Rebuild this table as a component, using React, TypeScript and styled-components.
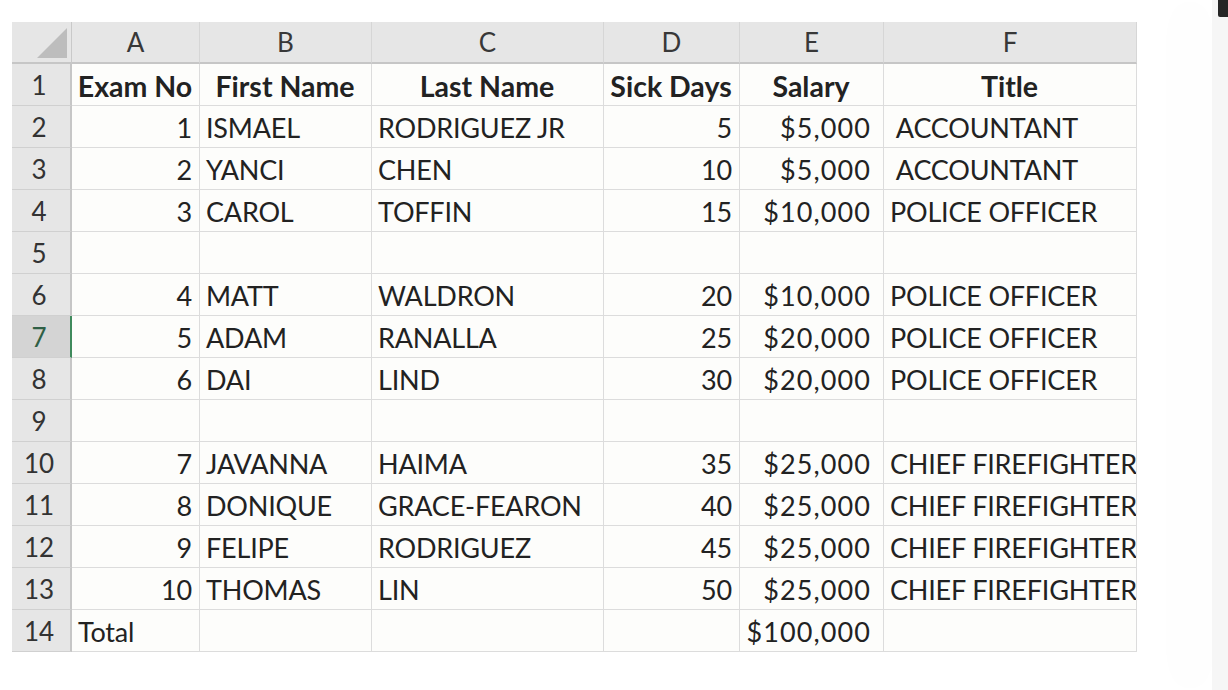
import React from "react";
import styled, { createGlobalStyle } from "styled-components";

const Global = createGlobalStyle`
  html, body { margin: 0; padding: 0; background: #ffffff; }
  body { width: 1228px; height: 690px; overflow: hidden; }
`;

const Page = styled.div`
  position: relative;
  width: 1228px;
  height: 690px;
  display: flex;
  background: #ffffff;
  font-family: Lato, "Open Sans", sans-serif;
`;

const Main = styled.div`
  flex: 1;
  padding: 22px 0 0 12px;
`;

const Side = styled.div`
  width: 16px;
  background: #f6f6f6;
  box-shadow: -30px 0 40px rgba(0, 0, 0, 0.025);
`;

const Corner = styled.div`
  position: absolute;
  top: 0;
  right: 0;
  width: 10px;
  height: 17px;
  background: #262626;
  border-bottom-left-radius: 2px;
`;

const Sheet = styled.div`
  display: grid;
  grid-template-columns: 60px 128px 172px 232px 136px 144px 253px;
  grid-auto-rows: 42px;
  width: 1125px;
  background: #fdfdfb;
`;

const ColHead = styled.div<{ $first?: boolean }>`
  background: #e6e6e6;
  border-right: 1px solid ${(p) => (p.$first ? "#c9c9c9" : "#d6d6d6")};
  border-bottom: 2px solid #c6c6c6;
  display: flex;
  align-items: center;
  justify-content: center;
  font-size: 26px;
  color: #383838;
  position: relative;
  box-sizing: border-box;
`;

const Triangle = styled.div`
  position: absolute;
  right: 4px;
  bottom: 4px;
  width: 0;
  height: 0;
  border-left: 30px solid transparent;
  border-bottom: 30px solid #bdbdbd;
`;

const RowHead = styled.div<{ $sel?: boolean }>`
  background: ${(p) => (p.$sel ? "#d4d4d4" : "#e6e6e6")};
  border-right: 2px solid ${(p) => (p.$sel ? "#3f8a5c" : "#c6c6c6")};
  border-bottom: 1px solid #d0d0d0;
  display: flex;
  align-items: center;
  justify-content: center;
  font-size: 26px;
  color: ${(p) => (p.$sel ? "#2f5f45" : "#333333")};
  box-sizing: border-box;
  padding-right: 4px;
`;

type Align = "left" | "right" | "center";

const Cell = styled.div<{ $align?: Align; $bold?: boolean; $money?: boolean }>`
  border-right: 1px solid #dcdcdc;
  border-bottom: 1px solid #dcdcdc;
  display: flex;
  align-items: center;
  justify-content: ${(p) =>
    p.$align === "right" ? "flex-end" : p.$align === "center" ? "center" : "flex-start"};
  padding: 2px ${(p) => (p.$money ? "12px" : "7px")} 0 6px;
  box-sizing: border-box;
  font-size: ${(p) => (p.$bold ? "28.5px" : "27px")};
  font-weight: ${(p) => (p.$bold ? 700 : 400)};
  color: #222222;
  white-space: pre;
  overflow: hidden;
  letter-spacing: ${(p) => (p.$bold ? "0px" : p.$money ? "1.1px" : "-0.2px")};
`;

type Row = [string, string, string, string, string, string];

const rows: Row[] = [
  ["1", "ISMAEL", "RODRIGUEZ JR", "5", "$5,000", " ACCOUNTANT"],
  ["2", "YANCI", "CHEN", "10", "$5,000", " ACCOUNTANT"],
  ["3", "CAROL", "TOFFIN", "15", "$10,000", "POLICE OFFICER"],
  ["", "", "", "", "", ""],
  ["4", "MATT", "WALDRON", "20", "$10,000", "POLICE OFFICER"],
  ["5", "ADAM", "RANALLA", "25", "$20,000", "POLICE OFFICER"],
  ["6", "DAI", "LIND", "30", "$20,000", "POLICE OFFICER"],
  ["", "", "", "", "", ""],
  ["7", "JAVANNA", "HAIMA", "35", "$25,000", "CHIEF FIREFIGHTER"],
  ["8", "DONIQUE", "GRACE-FEARON", "40", "$25,000", "CHIEF FIREFIGHTER"],
  ["9", "FELIPE", "RODRIGUEZ", "45", "$25,000", "CHIEF FIREFIGHTER"],
  ["10", "THOMAS", "LIN", "50", "$25,000", "CHIEF FIREFIGHTER"],
];

const headers = ["Exam No", "First Name", "Last Name", "Sick Days", "Salary", "Title"];
const letters = ["A", "B", "C", "D", "E", "F"];
const aligns: Align[] = ["right", "left", "left", "right", "right", "left"];

export default function App() {
  return (
    <Page>
      <Global />
      <Main>
        <Sheet>
          <ColHead $first>
            <Triangle />
          </ColHead>
          {letters.map((l) => (
            <ColHead key={l}>{l}</ColHead>
          ))}

          <RowHead>1</RowHead>
          {headers.map((h) => (
            <Cell key={h} $align="center" $bold>
              {h}
            </Cell>
          ))}

          {rows.map((r, i) => (
            <React.Fragment key={i}>
              <RowHead $sel={i + 2 === 7}>{i + 2}</RowHead>
              {r.map((v, j) => (
                <Cell key={j} $align={aligns[j]} $money={j === 4}>
                  {v}
                </Cell>
              ))}
            </React.Fragment>
          ))}

          <RowHead>14</RowHead>
          <Cell>Total</Cell>
          <Cell />
          <Cell />
          <Cell />
          <Cell $align="right" $money>
            $100,000
          </Cell>
          <Cell />
        </Sheet>
      </Main>
      <Side />
      <Corner />
    </Page>
  );
}
